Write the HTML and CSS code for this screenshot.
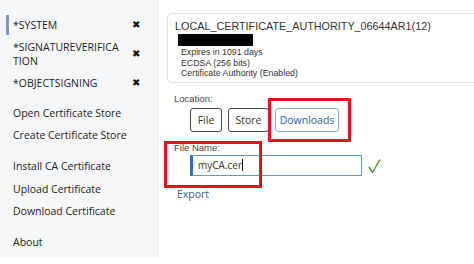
FILE: index.html
```html
<!DOCTYPE html>
<html lang="en">
<head>
  <meta charset="UTF-8">
  <title>Certificates</title>
  <link rel="stylesheet" href="styles.css">
</head>
<body>

<div class="page">
  <div class="sidebar">
    <div class="stores">
      <div class="store active"><span>*SYSTEM</span><span class="close">&#10006;</span></div>
      <div class="store"><span>*SIGNATUREVERIFICA<br>TION</span><span class="close">&#10006;</span></div>
      <div class="store"><span>*OBJECTSIGNING</span><span class="close">&#10006;</span></div>
    </div>

    <div class="menu">
      <a>Open Certificate Store</a>
      <a>Create Certificate Store</a>
    </div>
    <div class="menu">
      <a>Install CA Certificate</a>
      <a>Upload Certificate</a>
      <a>Download Certificate</a>
    </div>
    <div class="menu">
      <a>About</a>
    </div>
  </div>

  <div class="main">
    <div class="cert-card">
      <div class="cert-title">LOCAL_CERTIFICATE_AUTHORITY_06644AR1(12)</div>
      <div class="redacted"></div>
      <div class="cert-info">
        Expires in 1091 days<br>
        ECDSA (256 bits)<br>
        Certificate Authority (Enabled)
      </div>
    </div>

    <div class="field-label">Location:</div>
    <div class="location-buttons">
      <button class="btn btn-file">File</button>
      <button class="btn btn-store">Store</button>
      <button class="btn btn-downloads selected">Downloads</button>
    </div>

    <div class="field-label label-file">File Name:</div>
    <div class="file-row">
      <div class="file-input">myCA.cer<span class="caret"></span></div>
      <svg class="check" width="13" height="16" viewBox="0 0 13 16">
        <path d="M1 9 L4.5 14.5 L12 1.5" fill="none" stroke="#4f8a3c" stroke-width="1.4"/>
      </svg>
    </div>

    <a class="export">Export</a>

    <div class="highlight hl-downloads"></div>
    <div class="highlight hl-filename"></div>
  </div>
</div>

</body>
</html>
```

FILE: styles.css
```css
body {
  margin: 0;
  font-family: "Open Sans", sans-serif;
  background: #fff;
  overflow: hidden;
}

.page {
  display: flex;
  width: 474px;
  height: 264px;
}

.sidebar {
  width: 158px;
  height: 258px;
  background: #f6f7f9;
  border-right: 1px solid #e6e8eb;
  padding-top: 15px;
  box-sizing: border-box;
  font-size: 10.5px;
  color: #222;
}

.store {
  display: flex;
  justify-content: space-between;
  align-items: center;
  margin: 0 0 2px 6px;
  padding: 3px 17px 3px 4px;
  line-height: 14px;
  border-left: 3px solid transparent;
}

.store.active {
  border-left-color: #7b98c8;
}

.store .close {
  font-size: 9.5px;
  color: #111;
}

.menu {
  padding-left: 13px;
  margin-top: 8.5px;
}

.stores + .menu {
  margin-top: 9px;
}

.menu a {
  display: block;
  line-height: 22.4px;
}

.main {
  position: relative;
  flex: 1;
  padding: 13px 0 0 9px;
  font-family: "Liberation Sans", Arial, sans-serif;
}

.cert-card {
  border: 1px solid #e2e2e2;
  border-right: none;
  border-radius: 5px 0 0 5px;
  height: 70px;
  box-sizing: border-box;
  padding: 5px 0 0 7px;
}

.cert-title {
  font-size: 10.8px;
  color: #333;
  line-height: 15px;
}

.redacted {
  width: 75px;
  height: 12px;
  background: #000;
  margin-left: 3px;
}

.cert-info {
  font-size: 8.8px;
  color: #333;
  line-height: 10.5px;
  padding: 1px 0 0 6px;
}

.field-label {
  font-size: 9.5px;
  color: #444;
  margin: 10px 0 0 7px;
}

.location-buttons {
  display: flex;
  gap: 6px;
  margin: 4px 0 0 23px;
}

.btn {
  font-family: "Open Sans", sans-serif;
  font-size: 10.5px;
  font-weight: 500;
  height: 24px;
  padding: 0;
  background: #fff;
  border: 1px solid #444;
  border-radius: 3px;
  color: #333;
}

.btn-file {
  width: 32px;
}

.btn-store {
  width: 41px;
}

.btn-downloads {
  width: 64px;
}

.btn.selected {
  border-color: #7fa9d9;
  color: #2d5ea8;
}

.label-file {
  margin-top: 10px;
}

.file-row {
  display: flex;
  align-items: center;
  gap: 6px;
  margin: 2px 0 0 23px;
}

.file-input {
  width: 172px;
  height: 21px;
  box-sizing: border-box;
  border: 1px solid #5b9bdc;
  border-left: 3px solid #2f6ebf;
  font-family: "Open Sans", sans-serif;
  font-size: 10px;
  color: #333;
  padding-left: 5px;
  line-height: 19px;
}

.caret {
  display: inline-block;
  width: 1px;
  height: 12px;
  background: #111;
  vertical-align: -2px;
}

.export {
  display: block;
  margin: 11px 0 0 10px;
  font-family: "Open Sans", sans-serif;
  font-size: 10.5px;
  line-height: 14px;
  color: #2f5ea8;
}

.highlight {
  position: absolute;
  border: 3px solid #e2141d;
  box-sizing: border-box;
}

.hl-downloads {
  left: 110px;
  top: 98px;
  width: 83px;
  height: 44px;
}

.hl-filename {
  left: 6px;
  top: 141px;
  width: 98px;
  height: 47px;
}
```
